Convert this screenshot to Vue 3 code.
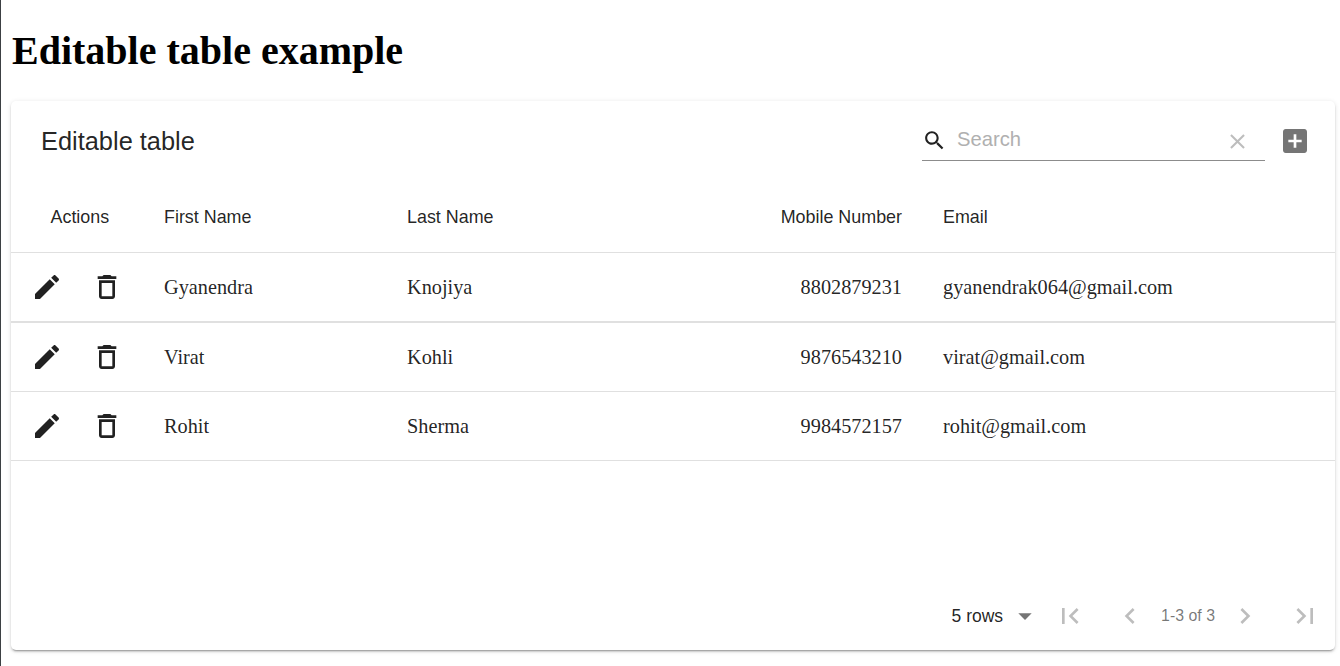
<script setup>
const columns = [
  { label: 'Actions', cls: 'actions' },
  { label: 'First Name' },
  { label: 'Last Name' },
  { label: 'Mobile Number', cls: 'num' },
  { label: 'Email' },
]
const rows = [
  { first: 'Gyanendra', last: 'Knojiya', mobile: '8802879231', email: 'gyanendrak064@gmail.com', hovered: true },
  { first: 'Virat', last: 'Kohli', mobile: '9876543210', email: 'virat@gmail.com' },
  { first: 'Rohit', last: 'Sherma', mobile: '9984572157', email: 'rohit@gmail.com' },
]
const icons = {
  edit: 'M3 17.25V21h3.75L17.81 9.94l-3.75-3.75L3 17.25zM20.71 7.04c.39-.39.39-1.02 0-1.41l-2.34-2.34c-.39-.39-1.02-.39-1.41 0l-1.83 1.83 3.75 3.75 1.83-1.83z',
  del: 'M6 19c0 1.1.9 2 2 2h8c1.1 0 2-.9 2-2V7H6v12zM8 9h8v10H8V9zm7.5-5l-1-1h-5l-1 1H5v2h14V4z',
  search: 'M15.5 14h-.79l-.28-.27C15.41 12.59 16 11.11 16 9.5 16 5.91 13.09 3 9.5 3S3 5.91 3 9.5 5.91 16 9.5 16c1.61 0 3.09-.59 4.23-1.57l.27.28v.79l5 4.99L20.49 19l-4.99-5zm-6 0C7.01 14 5 11.99 5 9.5S7.01 5 9.5 5 14 7.01 14 9.5 11.99 14 9.5 14z',
  clear: 'M19 6.41L17.59 5 12 10.59 6.41 5 5 6.41 10.59 12 5 17.59 6.41 19 12 13.41 17.59 19 19 17.59 13.41 12z',
  add: 'M19 3H5c-1.11 0-2 .9-2 2v14c0 1.1.89 2 2 2h14c1.1 0 2-.9 2-2V5c0-1.1-.9-2-2-2zm-2 10h-4v4h-2v-4H7v-2h4V7h2v4h4v2z',
  caret: 'M7 10l5 5 5-5z',
  first: 'M18.41 16.59L13.82 12l4.59-4.59L17 6l-6 6 6 6zM6 6h2v12H6z',
  prev: 'M15.41 7.41L14 6l-6 6 6 6 1.41-1.41L10.83 12z',
  next: 'M10 6L8.59 7.41 13.17 12l-4.58 4.59L10 18l6-6z',
  last: 'M5.59 7.41L10.18 12 5.59 16.59 7 18l6-6-6-6zM16 6h2v12h-2z',
}
</script>

<template>
  <div class="page">
    <h1 class="heading">Editable table example</h1>
    <section class="card">
      <header class="toolbar">
        <h2 class="title">Editable table</h2>
        <div class="search">
          <svg class="ico-search" viewBox="0 0 24 24"><path :d="icons.search" /></svg>
          <span class="placeholder">Search</span>
          <svg class="ico-clear" viewBox="0 0 24 24"><path :d="icons.clear" /></svg>
        </div>
        <svg class="ico-add" viewBox="0 0 24 24"><path :d="icons.add" /></svg>
      </header>
      <table class="table">
        <colgroup>
          <col class="c1" /><col class="c2" /><col class="c3" /><col class="c4" /><col />
        </colgroup>
        <thead>
          <tr>
            <th v-for="c in columns" :key="c.label" :class="c.cls">{{ c.label }}</th>
          </tr>
        </thead>
        <tbody>
          <tr v-for="r in rows" :key="r.first" :class="{ hovered: r.hovered }">
            <td class="action-cell">
              <div class="action-icons">
                <svg class="ico-row" viewBox="0 0 24 24"><path :d="icons.edit" /></svg>
                <svg class="ico-row" viewBox="0 0 24 24"><path :d="icons.del" /></svg>
              </div>
            </td>
            <td>{{ r.first }}</td>
            <td>{{ r.last }}</td>
            <td class="num">{{ r.mobile }}</td>
            <td>{{ r.email }}</td>
          </tr>
        </tbody>
      </table>
      <footer class="pager">
        <span class="rows-label">5 rows</span>
        <svg class="ico-caret" viewBox="0 0 24 24"><path :d="icons.caret" /></svg>
        <svg class="ico-page first" viewBox="0 0 24 24"><path :d="icons.first" /></svg>
        <svg class="ico-page prev" viewBox="0 0 24 24"><path :d="icons.prev" /></svg>
        <span class="range">1-3 of 3</span>
        <svg class="ico-page next" viewBox="0 0 24 24"><path :d="icons.next" /></svg>
        <svg class="ico-page last" viewBox="0 0 24 24"><path :d="icons.last" /></svg>
      </footer>
    </section>
  </div>
</template>

<style>
html, body { background: #fff; }
body { border-left: 1px solid #3c4043; min-height: 666px; box-sizing: border-box; overflow: hidden; }
</style>

<style scoped>
.page {
  padding: 0 5px 0 10px;
  font-family: "Liberation Serif", serif;
}
.heading {
  margin: 0;
  padding: 28px 0 0 1px;
  height: 101px;
  box-sizing: border-box;
  font-size: 40px;
  line-height: 46px;
  font-weight: 700;
  color: #000;
}
.card {
  height: 549px;
  display: flex;
  flex-direction: column;
  background: #fff;
  border-radius: 5px;
  box-shadow: 0 3px 1px -2px rgba(0,0,0,.2), 0 2px 2px rgba(0,0,0,.14), 0 1px 5px rgba(0,0,0,.12);
}
.toolbar {
  height: 81px;
  flex: none;
  display: flex;
  align-items: center;
  padding: 0 24px 0 30px;
}
.title {
  margin: -2px auto 0 0;
  font: 400 25.4px/30px "Liberation Sans", sans-serif;
  color: rgba(0,0,0,.87);
}
.search {
  width: 343px;
  height: 40px;
  box-sizing: border-box;
  margin-top: -2px;
  display: flex;
  align-items: center;
  border-bottom: 1px solid #8c8c8c;
  font-family: "Liberation Sans", sans-serif;
}
.ico-search { width: 25px; height: 25px; fill: rgba(0,0,0,.87); }
.placeholder { margin-left: 10px; margin-top: -2px; flex: 1; font-size: 20.2px; color: #b0b0b0; }
.ico-clear { width: 25px; height: 25px; margin-right: 15px; margin-top: 2px; fill: rgba(0,0,0,.26); }
.ico-add { width: 32px; height: 32px; margin-left: 14px; margin-top: -1px; fill: rgba(0,0,0,.54); }
.table {
  width: 100%;
  table-layout: fixed;
  border-collapse: separate;
  border-spacing: 0;
  flex: none;
}
.c1 { width: 133px; }
.c2, .c3 { width: 243px; }
.c4 { width: 293px; }
th, td {
  box-sizing: border-box;
  padding: 0 20px;
  text-align: left;
  border-bottom: 1px solid #e0e0e0;
}
th {
  height: 71px;
  font: 400 17.9px/20px "Liberation Sans", sans-serif;
  color: rgba(0,0,0,.87);
}
td {
  height: 69px;
  font-size: 20.3px;
  color: rgba(0,0,0,.87);
}
th.actions { padding-left: 39.5px; padding-right: 0; }
.num { text-align: right; padding-right: 21px; }
.hovered td { height: 70px; border-bottom-width: 2px; }
td.action-cell { padding: 0; }
.action-icons {
  display: flex;
  gap: 28px;
  padding-left: 20px;
}
.ico-row { width: 32px; height: 32px; flex: none; fill: rgba(0,0,0,.87); }
.pager {
  margin-top: auto;
  height: 68px;
  flex: none;
  display: flex;
  align-items: center;
  font-family: "Liberation Sans", sans-serif;
  padding-right: 14px;
  justify-content: flex-end;
}
.rows-label { font-size: 17.5px; color: rgba(0,0,0,.87); }
.ico-caret { width: 32px; height: 32px; margin-left: 6px; fill: rgba(0,0,0,.54); }
.ico-page { width: 32px; height: 32px; fill: rgba(0,0,0,.26); flex: none; }
.first { margin-left: 13px; }
.prev { margin-left: 28px; }
.range { margin: 0 14px 0 15px; font-size: 15.9px; color: rgba(0,0,0,.54); }
.last { margin-left: 28px; }
</style>
